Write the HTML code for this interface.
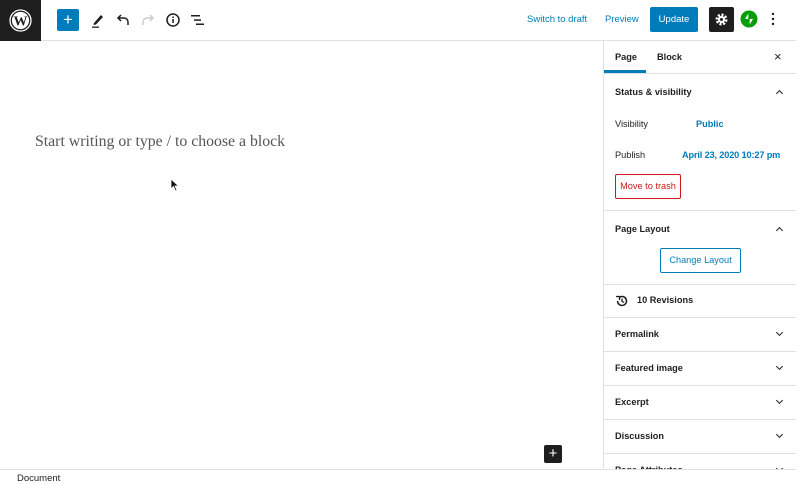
<!DOCTYPE html>
<html><head><meta charset="utf-8"><style>
*{box-sizing:border-box;margin:0;padding:0}
body{width:796px;height:485px;overflow:hidden;background:#fff;font-family:"Liberation Sans",Arial,sans-serif;color:#1e1e1e;position:relative}
.abs{position:absolute}
.top{left:0;top:0;width:796px;height:41px;border-bottom:1px solid #e0e0e0;background:#fff}
.wp{left:0;top:0;width:41px;height:41px;background:#1e1e1e}
.blue{color:#007cba}
.side{left:603px;top:41px;width:193px;height:428px;border-left:1px solid #e0e0e0;background:#fff}
.f{font-size:9.5px}
.side .f{font-size:9.2px}
.row{position:absolute;left:0;width:193px;border-top:1px solid #e0e0e0}
.chev{position:absolute;right:15px;width:5px;height:5px;border-right:1.3px solid #1e1e1e;border-bottom:1.3px solid #1e1e1e}
.dn{transform:rotate(45deg)}
.up{transform:rotate(-135deg)}
b{font-weight:bold}
</style></head><body>
<div class="abs top"></div>
<div class="abs wp">
<svg width="41" height="41" viewBox="0 0 41 41"><circle cx="20.5" cy="20.5" r="10.5" fill="none" stroke="#fff" stroke-width="1.3"/><circle cx="20.5" cy="20.5" r="8.6" fill="#fff"/><text x="20.5" y="25.5" font-family="Liberation Serif,serif" font-size="14" font-weight="bold" fill="#1e1e1e" text-anchor="middle">W</text></svg>
</div>
<div class="abs" style="left:57px;top:9px;width:22px;height:22px;background:#007cba;border-radius:2px;color:#fff;text-align:center;font-size:17px;line-height:21px">+</div>
<svg class="abs" style="left:88px;top:10px" width="20" height="20" viewBox="0 0 20 20"><path d="M6 13 L13 5 L15 7 L8 14.5 L5.5 15 Z" fill="#1e1e1e"/><rect x="4" y="16.5" width="7" height="1.3" fill="#1e1e1e"/></svg>
<svg class="abs" style="left:113px;top:10px" width="20" height="20" viewBox="0 0 20 20"><path d="M15 15 V12 A4 4 0 0 0 11 8 H5 M8 5 L5 8 L8 11" fill="none" stroke="#1e1e1e" stroke-width="1.5"/></svg>
<svg class="abs" style="left:138px;top:10px" width="20" height="20" viewBox="0 0 20 20"><path d="M5 15 V12 A4 4 0 0 1 9 8 H15 M12 5 L15 8 L12 11" fill="none" stroke="#ccc" stroke-width="1.5"/></svg>
<svg class="abs" style="left:163px;top:10px" width="20" height="20" viewBox="0 0 20 20"><circle cx="10" cy="10" r="6" fill="none" stroke="#1e1e1e" stroke-width="1.5"/><rect x="9.3" y="9" width="1.5" height="4" fill="#1e1e1e"/><rect x="9.3" y="6.5" width="1.5" height="1.5" fill="#1e1e1e"/></svg>
<svg class="abs" style="left:188px;top:10px" width="20" height="20" viewBox="0 0 20 20"><rect x="3" y="5" width="9" height="1.5" fill="#1e1e1e"/><rect x="6" y="9.3" width="7" height="1.5" fill="#1e1e1e"/><rect x="8" y="13.5" width="8" height="1.5" fill="#1e1e1e"/></svg>
<div class="abs blue f" style="left:527px;top:14px">Switch to draft</div>
<div class="abs blue f" style="left:605px;top:14px">Preview</div>
<div class="abs f" style="left:650px;top:7px;width:48px;height:25px;background:#007cba;color:#fff;border-radius:2px;text-align:center;line-height:25px">Update</div>
<div class="abs" style="left:709px;top:7px;width:25px;height:25px;background:#1e1e1e;border-radius:2px"><svg width="25" height="25" viewBox="0 0 25 25"><circle cx="12.5" cy="12.5" r="4.5" fill="none" stroke="#fff" stroke-width="3" stroke-dasharray="2 1.5"/><circle cx="12.5" cy="12.5" r="3.5" fill="#fff"/><circle cx="12.5" cy="12.5" r="1.5" fill="#1e1e1e"/></svg></div>
<svg class="abs" style="left:740px;top:10px" width="18" height="18" viewBox="0 0 18 18"><circle cx="9" cy="9" r="8.5" fill="#069e08"/><path d="M8.3 3.5 V9 H5 Z M9.7 14.5 V9 H13 Z" fill="#fff"/></svg>
<svg class="abs" style="left:768px;top:12px" width="10" height="16"><circle cx="5" cy="2" r="1.2" fill="#1e1e1e"/><circle cx="5" cy="7" r="1.2" fill="#1e1e1e"/><circle cx="5" cy="12" r="1.2" fill="#1e1e1e"/></svg>

<div class="abs" style="left:35px;top:133px;font-family:'Liberation Serif',serif;font-size:15.8px;color:#555">Start writing or type / to choose a block</div>
<svg class="abs" style="left:170px;top:178px" width="10" height="14" viewBox="0 0 10 14"><path d="M1 1 V11 L3.5 8.5 L5.5 13 L7 12.3 L5 8 H8.5 Z" fill="#111" stroke="#fff" stroke-width=".8"/></svg>
<div class="abs" style="left:544px;top:445px;width:18px;height:18px;background:#1e1e1e;border-radius:2px;color:#fff;text-align:center;font-size:15px;line-height:18px">+</div>

<div class="abs side">
<div class="abs f" style="left:11px;top:11px"><b>Page</b></div>
<div class="abs" style="left:0;top:29px;width:42px;height:3px;background:#007cba"></div>
<div class="abs f" style="left:53px;top:11px"><b>Block</b></div>
<div class="abs" style="left:170px;top:8px;font-size:13px">×</div>
<div class="row" style="top:32px;height:137px">
 <div class="abs f" style="left:11px;top:13px"><b>Status &amp; visibility</b></div><div class="chev up" style="top:17px"></div>
 <div class="abs f" style="left:11px;top:45px">Visibility</div>
 <div class="abs f blue" style="left:92px;top:45px"><b>Public</b></div>
 <div class="abs f" style="left:11px;top:76px">Publish</div>
 <div class="abs f blue" style="left:78px;top:76px;letter-spacing:-0.15px"><b>April 23, 2020 10:27 pm</b></div>
 <div class="abs f" style="left:11px;top:100px;width:66px;height:25px;border:1px solid #cc1818;border-radius:2px;color:#cc1818;text-align:center;line-height:23px">Move to trash</div>
</div>
<div class="row" style="top:169px;height:75px">
 <div class="abs f" style="left:11px;top:13px"><b>Page Layout</b></div><div class="chev up" style="top:17px"></div>
 <div class="abs f blue" style="left:56px;top:37px;width:81px;height:25px;border:1px solid #007cba;border-radius:2px;text-align:center;line-height:23px">Change Layout</div>
</div>
<div class="row" style="top:243px;height:33px">
 <svg class="abs" style="left:11px;top:9px" width="14" height="14" viewBox="0 0 14 14"><path d="M2.5 7 A4.5 4.5 0 1 0 4 3.6" fill="none" stroke="#1e1e1e" stroke-width="1.5"/><path d="M1 2.5 L4.5 2.5 L4.5 6" fill="none" stroke="#1e1e1e" stroke-width="1.3"/><path d="M7 4.5 V7.3 L9 8.5" fill="none" stroke="#1e1e1e" stroke-width="1.3"/></svg>
 <div class="abs f" style="left:33px;top:10px"><b>10 Revisions</b></div>
</div>
<div class="row" style="top:276px;height:34px"><div class="abs f" style="left:11px;top:11px"><b>Permalink</b></div><div class="chev dn" style="top:12px"></div></div>
<div class="row" style="top:310px;height:34px"><div class="abs f" style="left:11px;top:11px"><b>Featured image</b></div><div class="chev dn" style="top:12px"></div></div>
<div class="row" style="top:344px;height:34px"><div class="abs f" style="left:11px;top:11px"><b>Excerpt</b></div><div class="chev dn" style="top:12px"></div></div>
<div class="row" style="top:378px;height:34px"><div class="abs f" style="left:11px;top:11px"><b>Discussion</b></div><div class="chev dn" style="top:12px"></div></div>
<div class="row" style="top:412px;height:20px"><div class="abs f" style="left:11px;top:11px"><b>Page Attributes</b></div><div class="chev dn" style="top:12px"></div></div>
</div>
<div class="abs" style="left:0;top:469px;width:796px;height:16px;border-top:1px solid #e0e0e0;background:#fff"></div>
<div class="abs f" style="left:17px;top:473px">Document</div>
</body></html>
